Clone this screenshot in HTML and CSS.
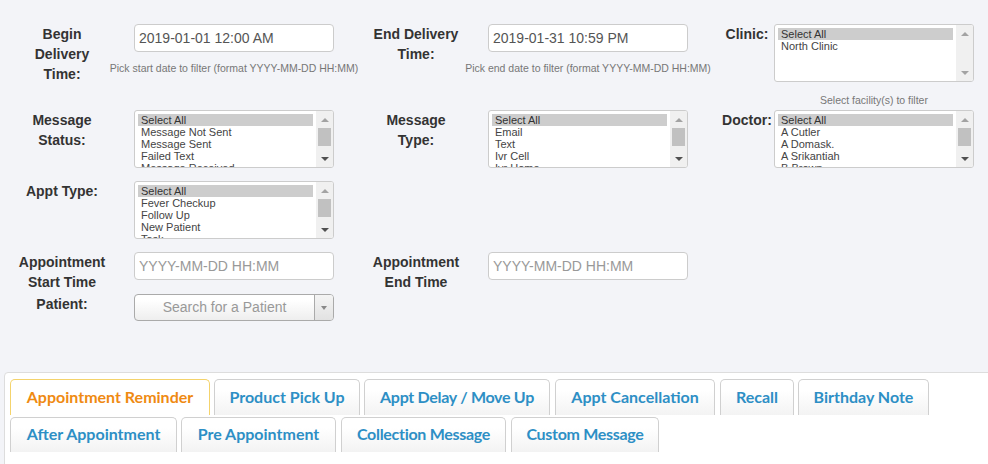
FILE: index.html
```html
<!DOCTYPE html>
<html>
<head>
<meta charset="utf-8">
<link rel="stylesheet" href="styles.css">
</head>
<body>
<div class="filters">
  <div class="row row-1">
    <div class="lbl">Begin Delivery Time:</div>
    <div class="field">
      <input class="txt no-mb" type="text" value="2019-01-01 12:00 AM">
      <div class="hint"><span>Pick start date to filter (format YYYY-MM-DD HH:MM)</span></div>
    </div>
    <div class="lbl">End Delivery Time:</div>
    <div class="field">
      <input class="txt no-mb" type="text" value="2019-01-31 10:59 PM">
      <div class="hint"><span>Pick end date to filter (format YYYY-MM-DD HH:MM)</span></div>
    </div>
    <div class="lbl lbl-narrow">Clinic:</div>
    <div class="field">
      <div class="listbox no-mb">
        <div class="opts">
          <div class="opt sel">Select All</div>
          <div class="opt">North Clinic</div>
        </div>
        <div class="sbar">
          <div class="sbtn"><span class="tri up off"></span></div>
          <div class="strack"></div>
          <div class="sbtn"><span class="tri down off"></span></div>
        </div>
      </div>
      <div class="hint hint-fac"><span>Select facility(s) to filter</span></div>
    </div>
  </div>

  <div class="row">
    <div class="lbl">Message Status:</div>
    <div class="field">
      <div class="listbox">
        <div class="opts">
          <div class="opt sel">Select All</div>
          <div class="opt">Message Not Sent</div>
          <div class="opt">Message Sent</div>
          <div class="opt">Failed Text</div>
          <div class="opt">Message Received</div>
        </div>
        <div class="sbar">
          <div class="sbtn"><span class="tri up off"></span></div>
          <div class="strack"><div class="thumb"></div></div>
          <div class="sbtn"><span class="tri down"></span></div>
        </div>
      </div>
    </div>
    <div class="lbl">Message Type:</div>
    <div class="field">
      <div class="listbox">
        <div class="opts">
          <div class="opt sel">Select All</div>
          <div class="opt">Email</div>
          <div class="opt">Text</div>
          <div class="opt">Ivr Cell</div>
          <div class="opt">Ivr Home</div>
        </div>
        <div class="sbar">
          <div class="sbtn"><span class="tri up off"></span></div>
          <div class="strack"><div class="thumb"></div></div>
          <div class="sbtn"><span class="tri down"></span></div>
        </div>
      </div>
    </div>
    <div class="lbl lbl-narrow">Doctor:</div>
    <div class="field">
      <div class="listbox">
        <div class="opts">
          <div class="opt sel">Select All</div>
          <div class="opt">A Cutler</div>
          <div class="opt">A Domask.</div>
          <div class="opt">A Srikantiah</div>
          <div class="opt">B Brown</div>
        </div>
        <div class="sbar">
          <div class="sbtn"><span class="tri up off"></span></div>
          <div class="strack"><div class="thumb"></div></div>
          <div class="sbtn"><span class="tri down"></span></div>
        </div>
      </div>
    </div>
  </div>

  <div class="row">
    <div class="lbl">Appt Type:</div>
    <div class="field">
      <div class="listbox">
        <div class="opts">
          <div class="opt sel">Select All</div>
          <div class="opt">Fever Checkup</div>
          <div class="opt">Follow Up</div>
          <div class="opt">New Patient</div>
          <div class="opt">Task</div>
        </div>
        <div class="sbar">
          <div class="sbtn"><span class="tri up off"></span></div>
          <div class="strack"><div class="thumb"></div></div>
          <div class="sbtn"><span class="tri down"></span></div>
        </div>
      </div>
    </div>
  </div>

  <div class="row">
    <div class="lbl">Appointment Start Time</div>
    <div class="field">
      <input class="txt" type="text" placeholder="YYYY-MM-DD HH:MM">
    </div>
    <div class="lbl">Appointment End Time</div>
    <div class="field">
      <input class="txt" type="text" placeholder="YYYY-MM-DD HH:MM">
    </div>
  </div>

  <div class="row">
    <div class="lbl">Patient:</div>
    <div class="field">
      <div class="combo">
        <span class="combo-text">Search for a Patient</span>
        <span class="combo-arrow"><span class="tri-s"></span></span>
      </div>
    </div>
  </div>
</div>

<div class="panel">
  <div class="tabs">
    <div class="tab active t-ar">Appointment Reminder</div>
    <div class="tab t-pp">Product Pick Up</div>
    <div class="tab t-dm">Appt Delay / Move Up</div>
    <div class="tab t-ac">Appt Cancellation</div>
    <div class="tab t-rc">Recall</div>
    <div class="tab t-bn">Birthday Note</div>
    <div class="tab t-aa row2">After Appointment</div>
    <div class="tab t-pa row2">Pre Appointment</div>
    <div class="tab t-cm row2">Collection Message</div>
    <div class="tab t-cu row2">Custom Message</div>
  </div>
</div>
</body>
</html>
```

FILE: styles.css
```css
* { box-sizing: border-box; }
html, body {
  margin: 0;
  padding: 0;
  background: #f3f4f8;
  font-family: "Liberation Sans", Arial, sans-serif;
  color: #333;
  overflow: hidden;
}
body { width: 988px; height: 464px; }

.filters {
  padding-top: 24px;
  padding-left: 16px;
}
.row {
  display: grid;
  grid-template-columns: 118px 236px 118px 232px 54px 200px;
  align-items: start;
}
.lbl {
  width: 92px;
  font-weight: bold;
  font-size: 14px;
  line-height: 20px;
  text-align: center;
  color: #333;
}
.lbl-narrow { width: 54px; }
.field { width: 200px; }

.txt {
  display: block;
  width: 200px;
  height: 28px;
  margin: 0 0 14px 0;
  padding: 0 4px;
  border: 1px solid #ccc;
  border-radius: 4px;
  background: #fff;
  font-family: "Liberation Sans", Arial, sans-serif;
  font-size: 14px;
  color: #555;
  outline: none;
}
.txt::placeholder { color: #999; opacity: 1; }
.no-mb { margin-bottom: 0 !important; }

.hint {
  display: flex;
  justify-content: center;
  white-space: nowrap;
  font-size: 10.5px;
  line-height: 15px;
  color: #777;
  margin-top: 9px;
}
.hint-fac { margin: 10px 0 2px; line-height: 16px; }

.listbox {
  display: flex;
  width: 200px;
  height: 58px;
  margin-bottom: 13px;
  border: 1px solid #ccc;
  border-radius: 3px;
  background: #fff;
  overflow: hidden;
}
.opts {
  flex: 1;
  padding: 3px 3px 0 3px;
  overflow: hidden;
}
.opt {
  font-size: 11px;
  line-height: 12px;
  height: 12px;
  padding-left: 3px;
  color: #444;
  white-space: nowrap;
}
.opt.sel { background: #cdcdcd; color: #333; }

.sbar {
  width: 17px;
  display: flex;
  flex-direction: column;
  background: #f0f0f0;
}
.sbtn {
  height: 17px;
  display: flex;
  align-items: center;
  justify-content: center;
}
.strack { flex: 1; padding: 0 2px; }
.thumb { height: 18px; background: #c1c1c1; }
.tri { width: 0; height: 0; border-left: 4px solid transparent; border-right: 4px solid transparent; }
.tri.up { border-bottom: 4px solid #505050; }
.tri.down { border-top: 4px solid #505050; }
.tri.up.off { border-bottom-color: #a3a3a3; }
.tri.down.off { border-top-color: #a3a3a3; }

.combo {
  display: flex;
  width: 200px;
  height: 27px;
  border: 1px solid #aaa;
  border-radius: 4px;
  background: linear-gradient(#ffffff 20%, #eeeeee 100%);
  overflow: hidden;
}
.combo-text {
  flex: 1;
  text-align: center;
  font-size: 14px;
  line-height: 25px;
  color: #999;
}
.combo-arrow {
  width: 19px;
  border-left: 1px solid #aaa;
  background: linear-gradient(#f4f4f4, #e2e2e2);
  display: flex;
  align-items: center;
  justify-content: center;
}
.tri-s { width: 0; height: 0; border-left: 3px solid transparent; border-right: 3px solid transparent; border-top: 4px solid #888; }

.panel {
  margin-top: 51px;
  margin-left: 4px;
  width: 1000px;
  height: 100px;
  background: #fff;
  border: 1px solid #ddd;
  border-radius: 4px;
  padding: 6px 0 0 5px;
}
.tabs {
  display: flex;
  flex-wrap: wrap;
  width: 940px;
  row-gap: 2px;
}
.tab {
  height: 36px;
  margin-right: 4px;
  padding: 0;
  text-align: center;
  border: 1px solid #d0d0d0;
  border-bottom: none;
  border-radius: 5px 5px 0 0;
  background: linear-gradient(#ffffff 30%, #f3f3f3 100%);
  font-family: Lato, "Liberation Sans", sans-serif;
  font-weight: bold;
  font-size: 16px;
  line-height: 34px;
  color: #2d8fc5;
  white-space: nowrap;
}
.tab.row2 { height: 35px; line-height: 32px; }
.t-ar { width: 200px; }
.t-pp { width: 146px; }
.t-dm { width: 186px; margin-right: 5px; letter-spacing: -0.3px; }
.t-ac { width: 160px; margin-right: 5px; }
.t-rc { width: 74px; }
.t-bn { width: 131px; }
.t-aa { width: 167px; }
.t-pa { width: 155px; margin-right: 5px; }
.t-cm { width: 165px; margin-right: 5px; letter-spacing: -0.3px; }
.t-cu { width: 148px; letter-spacing: -0.3px; }
.tab.active {
  background: #fff;
  border-color: #f4d36c;
  color: #ef8a12;
}
```
